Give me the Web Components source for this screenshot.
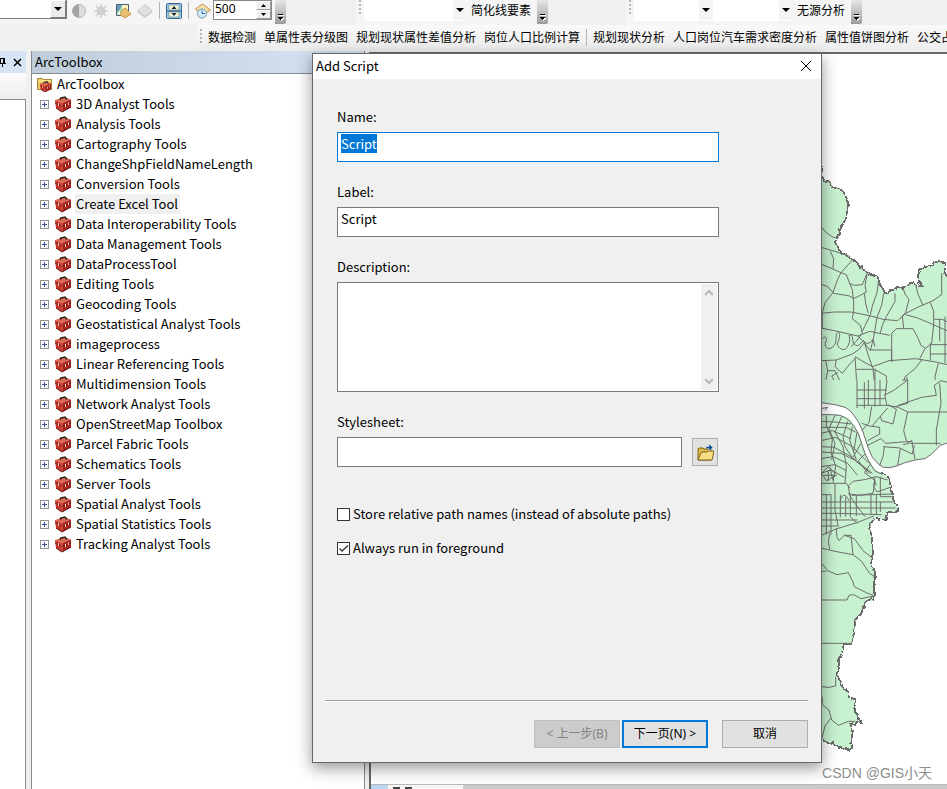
<!DOCTYPE html>
<html lang="zh-CN">
<head>
<meta charset="utf-8">
<title>ArcToolbox - Add Script</title>
<style>
  html, body { height: 100%; margin: 0; overflow: hidden; }
  body {
    --ui: "Noto Sans CJK SC", "Noto Sans", sans-serif;
    --cjk: "Noto Sans CJK SC", sans-serif;
    font: 13px/20px var(--ui);
    color: #000;
    background: #f0f0f0;
  }
</style>
</head>
<body>
<gis-app></gis-app>

<script>
(function () {
  'use strict';

  // Shared base: parses the class's static markup into an open shadow root
  class GisElement extends HTMLElement {
    constructor() {
      super();
      const template = document.createElement('template');
      template.innerHTML = this.constructor.markup;
      this.attachShadow({ mode: 'open' }).appendChild(template.content.cloneNode(true));
    }
    $(sel) { return this.shadowRoot.querySelector(sel); }
  }

  // ── Toolbar pieces ──────────────────────────────────────────

  class GisGrip extends GisElement {
    static markup = `
      <style>
        :host { display: block; flex: none; width: 2px; height: 16px;
          background: repeating-linear-gradient(#b4b4b4 0 2px, transparent 2px 4px); }
      </style>`;
  }

  class GisOverflow extends GisElement {
    static markup = `
      <style>
        :host { display: block; flex: none; width: 11px; height: 24px; }
        button { display: flex; align-items: flex-end; justify-content: center; width: 100%; height: 100%;
          border: 0; padding: 0 0 3px; border-radius: 0 0 2px 0; background: linear-gradient(#e6e6e6, #9c9c9c); }
      </style>
      <button aria-label="Toolbar options">
        <svg width="7" height="7" shape-rendering="crispEdges"><path d="M1 1h6v1H1zM2 4h5L4.500 7z" fill="#fff"/><path d="M1 0h5v1H1zM1 3h5L3.500 6z"/></svg>
      </button>`;
  }

  class GisCombo extends GisElement {
    static markup = `
      <style>
        :host { display: grid; flex: none; box-sizing: border-box; height: 21px; background: #fff; }
        select { grid-area: 1 / 1; appearance: none; width: 100%; height: 100%; border: 0; background: none; }
        span { grid-area: 1 / 1; justify-self: end; display: flex; align-items: center; justify-content: center;
          width: 13px; background: #f4f4f4; pointer-events: none; margin-bottom: 1px; }
        :host([boxed]) { height: 19px; border: solid #7a7a7a; border-width: 0 1px 1px 0; }
        :host([boxed]) span { width: 14px; border: 1px solid; border-color: #fff #808080 #808080 #fff; margin: 0; background: #ececec; }
      </style>
      <select aria-label="Layer"></select>
      <span><svg width="8" height="4"><path d="M0 0h8L4 4z"/></svg></span>`;
  }

  class GisSpinner extends GisElement {
    static markup = `
      <style>
        :host { display: flex; flex: none; width: 59px; height: 20px; background: #fff; border: 1px solid #8a8a8a; box-sizing: border-box; }
        input { flex: 1; min-width: 0; border: 0; padding: 0 0 2px 1px; background: none; font: 12px/16px "Noto Sans", sans-serif; outline: 0; }
        div { display: flex; flex-direction: column; width: 15px; }
        button { flex: 1; display: flex; align-items: center; justify-content: center; padding: 0;
          border: 1px solid; border-color: #fff #999 #999 #fff; background: #efefef; }
      </style>
      <input aria-label="Size" value="500">
      <div>
        <button aria-label="Increase"><svg width="5" height="3"><path d="M0 3h5L2.500 0z"/></svg></button>
        <button aria-label="Decrease"><svg width="5" height="3"><path d="M0 0h5L2.500 3z"/></svg></button>
      </div>`;
  }

  class GisToolbars extends GisElement {
    static markup = `
      <style>
        :host { display: block; overflow: hidden; height: 51px; background: #f0f0f0; }
        .row { display: flex; align-items: flex-start; white-space: nowrap; }
        .first { height: 25px; }
        .bar { display: flex; align-items: flex-start; flex: none; background: #f5f5f5; height: 25px; }
        .icons { display: flex; gap: 6px; padding: 2px 2px 0 4px; align-items: center; }
        .sep { width: 1px; height: 17px; background: #b5b5b5; }
        .text { font: 12px/20px var(--cjk); padding: 0 6px 0 5px; color: #000; }
        .b2 { margin-left: 70px; padding-left: 3px; }
        .b3 { margin-left: 78px; padding-left: 3px; }
        .w102 { width: 102px; margin: 0 0 0 3px; }
        .w79 { width: 79px; }
        .w78 { width: 78px; margin: 0 1px 0 3px; }
        .buttons { align-items: center; box-sizing: border-box; height: 26px; margin-left: 197px; padding: 0 0 2px 3px;
          background: linear-gradient(#f9f9f9, #ececec); border-radius: 3px 0 0 3px; }
        .buttons button { flex: none; border: 0; padding: 0; margin-left: 8px; background: none; font: 12px/20px var(--cjk); }
        .buttons gis-grip { margin-right: -2px; }
        .buttons .sep { flex: none; margin: 0 -2px 0 6px; }
      </style>
      <div class="row first">
        <div class="bar">
          <gis-combo boxed style="width: 67px"></gis-combo>
          <div class="icons">
            <svg width="16" height="16"><circle cx="8" cy="8" r="6.500" fill="#ddd" stroke="#b4b4b4"/><path d="M8 1.500a6.500 6.500 0 0 0 0 13z" fill="#a4a4a4"/></svg>
            <svg width="16" height="16"><path d="M8 1v14M1 8h14M3 3l10 10M13 3L3 13" stroke="#d8d8d8" stroke-width="2"/><circle cx="8" cy="8" r="4.500" fill="#d0d0d0"/></svg>
            <svg width="16" height="16"><path d="M1.500 1.500h12v11h-12z" fill="#a9d6a1" stroke="#476474"/><path d="M2 2h5L5 6 2 9z" fill="#6699c6"/><path d="M7 2h6v6l-2-3-4 1z" fill="#fff3c4"/><path d="M10 5l6 6-6 4-6-4z" fill="#e9bd72" stroke="#c79a50"/><path d="M2 11l3-3v4z" fill="#fff"/></svg>
            <svg width="16" height="16"><path d="M8 1.500l7.500 6.500L8 13.500.5 8z" fill="#e0e0e0" stroke="#c8c8c8"/><path d="M1 9l7 5.500L15 9" fill="none" stroke="#c4c4c4"/></svg>
            <i class="sep"></i>
            <svg width="16" height="16"><rect x=".5" y=".5" width="15" height="15" rx="1" fill="#9ccaec" stroke="#39678c"/><path d="M3 2h10v5H3zM3 9h10v5H3z" fill="#f8f5d2" stroke="#4a6c82" stroke-width=".5"/><path d="M8 3l2.500 3h-5zM8 13l2.500-3h-5z" fill="#123"/><path d="M1 8h14" stroke="#264f71"/></svg>
            <i class="sep"></i>
            <svg width="16" height="16"><path d="M7.500 1L15.500 7 8 12 .5 6z" fill="#f7dfaa" stroke="#c18a45"/><circle cx="7" cy="10.500" r="4.500" fill="#d6ebf9" stroke="#6b96b9"/><path d="M7 7.500v3h3" fill="none" stroke="#286aa2"/></svg>
          </div>
          <gis-spinner></gis-spinner>
          <gis-overflow style="margin-left: 3px"></gis-overflow>
        </div>
        <div class="bar b2"><gis-grip></gis-grip><gis-combo class="w102"></gis-combo><span class="text">简化线要素</span><gis-overflow></gis-overflow></div>
        <div class="bar b3"><gis-grip></gis-grip><gis-combo class="w78"></gis-combo><gis-combo class="w79"></gis-combo><span class="text">无源分析</span><gis-overflow></gis-overflow></div>
      </div>
      <div class="row buttons">
        <gis-grip></gis-grip>
        <button>数据检测</button><button>单属性表分级图</button><button>规划现状属性差值分析</button><button>岗位人口比例计算</button>
        <i class="sep"></i>
        <button>规划现状分析</button><button>人口岗位汽车需求密度分析</button><button>属性值饼图分析</button><button>公交占</button>
      </div>`;
  }

  // ── ArcToolbox tree ─────────────────────────────────────────

  const TOOLBOX = `
    <path d="M0 4L9 1l7 2.500L7 7z" fill="#dd6a54"/>
    <path d="M0 4l7 3v9l-6-4z" fill="#c8352a"/>
    <path d="M7 7l9-3.500V11l-9 5z" fill="#a8231d"/>
    <path d="M5 3.500L6 2l4-1 2 2.500" fill="none" stroke="#2c2525" stroke-width="1.500"/>
    <path d="M0 7l7 3.500L16 7" fill="none" stroke="#701310"/>
    <path d="M7 7v9" stroke="#d9604f"/>
    <path d="M3 7h1v3H3zM10 8h1v3h-1zM13 6.500h1v2.500h-1z" fill="#f0d8d0"/>
    <path d="M1 12l6 4 9-5" fill="none" stroke="#5e1411"/>`;

  class GisToolboxItem extends GisElement {
    static markup = `
      <style>
        :host { display: flex; align-items: center; height: 20px; padding-left: 8px; }
        button { display: flex; padding: 0; border: 0; background: none; margin-right: 6px; }
        .name { margin-left: 3px; padding: 0 2px 0 1px; white-space: nowrap; }
        :host([current]) .name { background: #f0f0f0; }
      </style>
      <button aria-label="Expand">
        <svg width="9" height="9" shape-rendering="crispEdges"><path d="M.5.5h8v8h-8z" fill="#fafafa" stroke="#919191"/><path d="M2 4h5v1H2zM4 2h1v5H4z" fill="#3b4f9c"/></svg>
      </button>
      <svg width="17" height="17">${TOOLBOX}</svg>
      <span class="name"><slot></slot></span>`;
  }

  class GisToolboxPanel extends GisElement {
    static markup = `
      <style>
        :host { display: flex; flex-direction: column; border: solid #868a91; border-width: 0 1px; background: #fff; }
        header { height: 22px; line-height: 22px; padding-left: 3px; border-bottom: 1px solid #868a91;
          background: linear-gradient(90deg, #bfcddb, #d5e3f2); }
        .root { display: flex; align-items: center; gap: 4px; height: 20px; padding-left: 5px; }
      </style>
      <header>ArcToolbox</header>
      <div class="tree">
        <div class="root">
          <svg width="16" height="16"><path d="M.5 2.500h5l1 1h8v10H.5z" fill="#e8c95e" stroke="#a48531"/><path d="M1 5h13" stroke="#fff2a8"/><g transform="translate(3 5) scale(.7)">${TOOLBOX}</g></svg>
          <span>ArcToolbox</span>
        </div>
        <slot></slot>
      </div>`;
  }

  class GisDockStub extends GisElement {
    static markup = `
      <style>
        :host { display: flex; flex-direction: column; background: #f5f5f5; }
        header { display: flex; justify-content: flex-end; align-items: center; gap: 6px; height: 22px; padding-right: 4px; background: #d5e3f2; }
        button { display: flex; border: 0; padding: 0; background: none; }
        .strip { height: 26px; background: linear-gradient(#fbfbfb, #eee); }
        .list { flex: 1; border: solid #868a91; border-width: 1px 1px 0 0; background: #fff; }
      </style>
      <header>
        <button aria-label="Pin"><svg width="9" height="10" shape-rendering="crispEdges"><path d="M1 1h6M2 1v5M5 1v5M6 1v5M0 6h8M4 6v4" stroke="#000" fill="none"/></svg></button>
        <button aria-label="Close"><svg width="9" height="9"><path d="M1 1l7 7M8 1L1 8" stroke="#000" stroke-width="1.500"/></svg></button>
      </header>
      <div class="strip"></div>
      <div class="list"></div>`;
  }

  // ── Map view ────────────────────────────────────────────────

  class GisMap extends GisElement {
    static markup = `
      <style>
        :host { display: flex; flex-direction: column; box-sizing: border-box; min-width: 0; border: solid #666; border-width: 2px 0 0 2px; background: #fff; }
        .canvas { flex: 1; display: flex; justify-content: flex-end; min-height: 0; overflow: hidden; }
        svg { display: block; flex: none; }
        footer { display: flex; height: 4px; border-top: 1px solid #b9b9b9; background: #f5f5f5; }
        footer i { width: 17px; background: #b9d7f0; }
        footer b { width: 7px; height: 2px; margin: 2px 0 0 5px; background: #444; }
        footer span { flex: 1; margin-left: 51px; background: #cacaca; }
      </style>
      <div class="canvas">
        <svg width="132" height="731" viewBox="815 54 132 731" shape-rendering="crispEdges" aria-label="Map">
          <defs>
            <!-- roughens district borders into a surveyed coast -->
            <filter id="rough" x="-5%" y="-5%" width="110%" height="110%"><feTurbulence type="fractalNoise" baseFrequency=".08" numOctaves="2" seed="4"/><feDisplacementMap in="SourceGraphic" scale="12" xChannelSelector="R" yChannelSelector="G"/></filter>
          </defs>
          <g fill="#c8f1d0" stroke="#6b6b6b" stroke-width="3" stroke-linejoin="round">
            <g transform="translate(815 150) scale(.33333)">
              <path stroke="none" d="M0 80H18L28 90 40 94 52 112 72 116 84 124 92 136 94 150 99 158 97 185 93 205 84 222 77 230 74 252 66 262 60 275 66 290 72 300 96 318 112 330 122 330 130 345 148 358 156 370 172 375 188 380 194 400 206 422 212 432 222 424 240 418 246 410 262 414 275 408 290 398 314 408 324 408 312 396 309 375 312 360 330 352 350 346 366 334 380 332 392 344 388 370 400 378V752H0z"/>
              <path fill="none" stroke-width="5" filter="url(#rough)" d="M18 50l6 8-4 10M18 80L28 90 40 94 52 112 72 116 84 124 92 136 94 150 99 158 97 185 93 205 84 222 77 230 74 252 66 262 60 275 66 290 72 300 96 318 112 330 122 330 130 345 148 358 156 370 172 375 188 380 194 400 206 422 212 432 222 424 240 418 246 410 262 414 275 408 290 398 314 408 324 408 312 396 309 375 312 360 330 352 350 346 366 334 380 332 392 344 388 370 400 378"/>
              <path fill="none" d="M18 230l16 18 20 14h8M18 292l28 8 20 6 40 14M46 304l10 22-2 30M18 342l24 10 36 16 36-40M78 368l-10 20-14 40-24 30-8 30v48M18 402l20 8 18 20 48 8 12 8 20-10 18-10-4-20 6-32M78 368l16 6 10 26 8 20 4 36v26l-4 24 24 20 6 24-18 24-16 16M104 400l14 6 24-2 14-34M148 430l4 30 8 30M190 396l-4 32-14 40-6 26-24 50M206 430l-6 36-14 36-10 60-10 40M240 430v24l-26 46-12 26-6 22M264 414l6 18 12 16-10 40-10 10 4 36M18 490l40-4h50l60 12 36 10 44 4 24-22 40-20 42-18 26-18V370M302 402l6 28 16 36M346 458l10 26v40l-6 56-20 16-16 30M272 494l36 10 38 16 54 24M18 534l40 8 70 16 36-14 60 12M128 558l20 20-16 20-20 14-48 18-46 2M148 578l16 22h66M148 578l14 44 12 34 4 40M230 636v-86l14-14h50l14 26 10 24 12 8M230 600v34M120 620l20 12 32 18 50-18 80-6 60 10 34 8M120 622l4 60-2 68M124 658h54l36 20v72M122 696h90M128 720h86M148 696v54M180 656v94M195 696v54M346 580v52M358 508h24l18 10M374 508v66M346 584h54M348 612h52M390 500v140M320 630l-20 26-30 24-10 40-30 20-40 10M370 640l-10 40 8 70M276 680v70M18 570c14-18 20-4 14 6s6 30 22 14 4-36 14-42 6 20 0 30 20 36 32 8-6-30 6-30 2 24 16 30 20-20 26-12 14 10 26-6l6 22M32 632l6 30-8 40-12 20M64 630l-4 20 22 20 24-30 14-14M38 662h22l16 34-8 40 10 14M62 700l-12-22 18-10M18 712l34 6 14 32M76 700l30 6v44M380 700h-20l-8 20 10 30"/>
            </g>
            <g transform="translate(815 380) scale(.33333)">
              <path stroke="none" d="M0 0H400V188L376 196 350 222 330 236 300 240 270 248 245 258 225 263 205 262H0z"/>
              <path stroke="none" d="M0 104H92L180 265 200 278 215 285 222 296 225 310 232 340 235 360 245 372 250 390 240 398 215 398 213 420 195 418 180 412 168 430 164 440 170 470 172 500 174 520 166 556 180 574 176 662H0z"/>
              <path fill="#fff" d="M18 68L60 74 90 82 105 92 118 108 130 125 142 150 152 180 160 205 172 232 190 252 205 262 240 268 215 285 200 278 180 268 165 245 150 215 140 185 130 155 118 135 105 118 92 110 75 104 50 102 18 104z" stroke="none"/>
              <path fill="none" d="M18 68L60 74 90 82 105 92 118 108 130 125 142 150 152 180 160 205 172 232 190 252 205 262 225 263 245 258 270 248 300 240 330 236 350 222 376 196 400 188M18 104h32l25 2 17 8 13 10 13 17 12 20 10 30 10 30 15 30 15 22 22 10M18 86l20-4-8 8"/>
              <path fill="none" stroke-width="5" filter="url(#rough)" d="M198 278L215 285 222 296 225 310 232 340 235 360 245 372 250 390 240 398 215 398 213 420 195 418 180 412 168 430 164 440 170 470 172 500 174 520 166 556 180 574 176 662"/>
              <path fill="none" d="M126 0v84M148 6v80M160 0v78M180 0v80M195 0v78M126 30h90M126 56h84M126 76h90l34 6 28 14h122M216 0l-6 50 6 26M208 46l30-16 40-30M262 0h16v70l-38 10M250 76l70-24 44-6-6-30 20-14 22 6M374 10l4 60-14 80v46M278 96l-12 56 8 30 12 8h90M220 74l24 14-10 44-34-10-4-14M170 80l-8 48-22 24M218 84l-30 34-16 20M140 130l24 8 30 4v20l-36 20M158 196l40-20 14 14 50-4 28-2M208 200l-4 30-10 26M204 200l50 4 38 18 6-26M256 206l-8 50M290 180l10 58M282 190l-18 4"/>
              <!-- riverside blocks -->
              <path fill="none" d="M18 124l40 2 50 6M18 142h74l30 14M18 160l34-8 56 24M18 182l44-10 50 28 48 48M18 200l40 2 50 28 64 50M18 216l60 4 40 20 50 40M18 236l36-6 44 20 30 36M18 260l42-6 34 18M18 280l30-10 40 22M18 310h76l10 14M34 108v30l18 40-4 40 14 40-8 50M60 106l-18 40 18 44-10 50M80 110l-20 46 24 44 10 60-4 50M98 124l-14 46 6 30 24 36M112 140l-8 40 20 60M126 156l-10 60M138 190l-24 42M150 222l-20 20 30 40M168 250l-20 28 30 22 6 16M60 280l-20-20-20 20 14 22 26-14M40 274v30M26 286h40M44 260l10 40M100 318l14-14 40-6 30-8 34 10M100 318l4 24 30 4 40-6 6-40M180 290l-4 30 10 16 40-14M196 290v60h34"/>
              <path fill="none" d="M18 344h30v120M34 344v120M18 366h216M18 384h224M18 400h52l130 4M18 420h110M18 438h50M60 310v80l10 50M76 344v68M92 350v60M106 344v66l20 20M124 348v60M168 344v60M184 344v60M196 366v30M76 364c4-24 16-24 26-2M100 340l20 30 30 40M110 346l126-4M18 466l48-20 60-18 50-20M44 460l-4 24 4 24M64 446l2 26 6 10 16-16h20l6 58M88 466l30 10 26 36 28 22M18 504l42 10 54 10 26 20 24 36 16 10M18 548l20 24 28 12 34-6 10 20 8 26 20 10 36 16M18 574h16M96 660l10-14 20-2 12 12 36-8"/>
            </g>
            <g transform="translate(815 580) scale(.33333)">
              <path stroke="none" d="M0 0H178V20L176 50 150 68 144 95 120 120 118 160 108 192 86 192 82 215 72 240 72 265 64 285 74 300 85 325 100 335 102 355 118 358 120 390 130 415 144 430 125 425 120 435 106 430 112 460 108 490 112 500 100 512 85 505 70 500 55 488 40 490 22 480 0 475z"/>
              <path fill="none" stroke-width="5" filter="url(#rough)" d="M178 0V20L176 50 150 68 144 95 120 120 118 160 108 192 86 192 82 215 72 240 72 265 64 285 74 300 85 325 100 335 102 355 118 358 120 390 130 415 144 430 125 425 120 435 106 430 112 460 108 490 112 500 100 512 85 505 70 500 55 488 40 490 22 480"/>
              <path fill="none" d="M18 60h78l6-14 14-2 22 12 38-8M18 190h90M18 320l24 2 20-4v-28M22 350v24l20 16 8 30 20 16 30-12h20M48 414l-18 24-10 40M112 0l6 20 36 18 20 8"/>
            </g>
          </g>
        </svg>
      </div>
      <footer><i></i><b></b><b></b><span></span></footer>`;
  }

  // ── Add Script wizard ───────────────────────────────────────

  class GisField extends GisElement {
    static markup = `
      <style>
        :host { display: block; margin-bottom: 22px; }
        label { display: block; height: 18px; line-height: 16px; margin-bottom: 5px; }
        .row { display: flex; align-items: center; gap: 10px; }
        input, textarea { display: block; box-sizing: border-box; flex: 1; min-width: 0; margin: 0; border: 1px solid #7a7a7a; border-radius: 0;
          background: #fff; color: #000; font: 13px/18px var(--ui); outline: 0; resize: none; }
        input { height: 30px; padding: 0 3px 7px; }
        input:focus { border-color: #0078d7; }
        input::selection { background: #0078d7; color: #fff; }
        .area { flex: 1; display: flex; box-sizing: border-box; height: 110px; border: 1px solid #7a7a7a; background: #fff; }
        .area textarea { border: 0; height: 100%; overflow: hidden; }
        .scroll { display: flex; flex-direction: column; justify-content: space-between; align-items: center; width: 16px; margin: 1px; padding: 6px 0; box-sizing: border-box; background: #f0f0f0; }
      </style>
      <label for="field"></label>
      <div class="row"><slot></slot></div>`;

    connectedCallback() {
      const row = this.$('.row');
      this.$('label').textContent = this.getAttribute('label');
      if (this.hasAttribute('multiline')) {
        row.insertAdjacentHTML('afterbegin', `
          <div class="area"><textarea id="field"></textarea><div class="scroll">
            <svg width="8" height="6"><path d="M0 5l4-4 4 4" fill="none" stroke="#b8b8b8" stroke-width="2"/></svg>
            <svg width="8" height="6"><path d="M0 1l4 4 4-4" fill="none" stroke="#b8b8b8" stroke-width="2"/></svg>
          </div></div>`);
        return;
      }
      row.insertAdjacentHTML('afterbegin', '<input id="field" type="text" spellcheck="false">');
      const input = this.$('input');
      input.value = this.getAttribute('value') || '';
      if (this.hasAttribute('current')) {
        input.focus();
        input.select();
      }
    }
  }

  class GisCheck extends GisElement {
    static markup = `
      <style>
        :host { display: block; margin-bottom: 14px; }
        label { display: flex; align-items: center; gap: 3px; height: 20px; white-space: nowrap; }
        span { display: grid; }
        input { grid-area: 1 / 1; appearance: none; box-sizing: border-box; width: 13px; height: 13px; margin: 0; border: 1px solid #333; background: #fff; }
        svg { grid-area: 1 / 1; visibility: hidden; pointer-events: none; }
        input:checked + svg { visibility: visible; }
      </style>
      <label>
        <span><input type="checkbox"><svg width="13" height="13"><path d="M2.500 6.500L5 9 11 3.500" fill="none" stroke="#333" stroke-width="1.300"/></svg></span>
        <slot></slot>
      </label>`;

    connectedCallback() {
      this.$('input').checked = this.hasAttribute('checked');
    }
  }

  class GisButton extends GisElement {
    static markup = `
      <style>
        :host { display: block; width: 86px; height: 28px; }
        button { display: flex; align-items: center; justify-content: center; width: 100%; height: 100%; padding: 0; border: 1px solid #adadad; background: #e1e1e1;
          color: #000; font: 12px/18px "Noto Sans", var(--ui); white-space: pre; }
        :host([primary]) button { border: 2px solid #0078d7; }
        button:disabled { border-color: #bfbfbf; background: #ccc; color: #838383; }
      </style>
      <button><slot></slot></button>`;

    connectedCallback() {
      this.$('button').disabled = this.hasAttribute('disabled');
      if (this.hasAttribute('label')) this.$('button').setAttribute('aria-label', this.getAttribute('label'));
    }
  }

  class GisScriptDialog extends GisElement {
    static markup = `
      <style>
        :host { display: flex; flex-direction: column; border: 1px solid #686868; background: #f0f0f0; box-shadow: 0 5px 15px rgba(0, 0, 0, .42); }
        header { display: flex; align-items: center; justify-content: space-between; box-sizing: border-box; height: 25px; padding: 0 9px 2px 3px; background: #fff; }
        header button { display: flex; border: 0; padding: 0; background: none; }
        .form { flex: 1; padding: 30px 102px 0 24px; }
        .checks { padding-top: 15px; }
        .browse { width: 26px; margin-right: 1px; }
        .actions { display: flex; justify-content: flex-end; gap: 2px; margin: 0 13px 14px 12px; padding-top: 19px; border-top: 1px solid #a0a0a0; box-shadow: inset 0 1px #fff; }
        .cancel { margin-left: 12px; }
      </style>
      <header><span>Add Script</span><button aria-label="Close"><svg width="12" height="12"><path d="M1 1l10 10M11 1L1 11" stroke="#000"/></svg></button></header>
      <div class="form">
        <gis-field label="Name:" value="Script" current></gis-field>
        <gis-field label="Label:" value="Script"></gis-field>
        <gis-field label="Description:" multiline></gis-field>
        <gis-field label="Stylesheet:">
          <gis-button class="browse" label="Browse"><svg width="17" height="17"><path d="M1 5l1-1h4l1 1h7v11H1z" fill="#dcb84c" stroke="#7c6318"/><path d="M4 9l1-1h5l1-1h6l-2 9H1z" fill="#f8df87" stroke="#7c6318"/><path d="M9 4V2.500h3V0l4 3.500L12 7V4.500h-1" fill="#0b4c8f" stroke="#dcecff" stroke-width=".5"/></svg></gis-button>
        </gis-field>
        <div class="checks">
          <gis-check>Store relative path names (instead of absolute paths)</gis-check>
          <gis-check checked>Always run in foreground</gis-check>
        </div>
      </div>
      <div class="actions">
        <gis-button disabled>&lt; 上一步(B)</gis-button>
        <gis-button primary>下一页(N) &gt;</gis-button>
        <gis-button class="cancel">取消</gis-button>
      </div>`;
  }

  // ── Shell ───────────────────────────────────────────────────

  const TOOLBOXES = [
    '3D Analyst Tools', 'Analysis Tools', 'Cartography Tools', 'ChangeShpFieldNameLength',
    'Conversion Tools', 'Create Excel Tool', 'Data Interoperability Tools', 'Data Management Tools',
    'DataProcessTool', 'Editing Tools', 'Geocoding Tools', 'Geostatistical Analyst Tools',
    'imageprocess', 'Linear Referencing Tools', 'Multidimension Tools', 'Network Analyst Tools',
    'OpenStreetMap Toolbox', 'Parcel Fabric Tools', 'Schematics Tools', 'Server Tools',
    'Spatial Analyst Tools', 'Spatial Statistics Tools', 'Tracking Analyst Tools'
  ];

  class GisApp extends GisElement {
    static markup = `
      <style>
        :host { display: flex; flex-direction: column; height: 100vh; position: relative; }
        main { flex: 1; display: flex; min-height: 0; }
        gis-dock-stub { width: 26px; margin-right: 5px; }
        gis-toolbox-panel { width: 332px; }
        gis-map { flex: 1; margin: 1px 0 0 4px; }
        gis-script-dialog { position: absolute; inset: 53px 125px 26px 312px; }
        .credit { position: absolute; right: 15px; bottom: 6px; font: 14px/20px "Liberation Sans", var(--cjk); color: #8c8c8c; }
      </style>
      <gis-toolbars></gis-toolbars>
      <main>
        <gis-dock-stub></gis-dock-stub>
        <gis-toolbox-panel></gis-toolbox-panel>
        <gis-map></gis-map>
      </main>
      <gis-script-dialog></gis-script-dialog>
      <span class="credit">CSDN @GIS小天</span>`;

    connectedCallback() {
      const panel = this.$('gis-toolbox-panel');
      TOOLBOXES.forEach((name) => {
        const item = document.createElement('gis-toolbox-item');
        item.textContent = name;
        item.toggleAttribute('current', name === 'Create Excel Tool');
        panel.appendChild(item);
      });
    }
  }

  customElements.define('gis-grip', GisGrip);
  customElements.define('gis-overflow', GisOverflow);
  customElements.define('gis-combo', GisCombo);
  customElements.define('gis-spinner', GisSpinner);
  customElements.define('gis-toolbars', GisToolbars);
  customElements.define('gis-toolbox-item', GisToolboxItem);
  customElements.define('gis-toolbox-panel', GisToolboxPanel);
  customElements.define('gis-dock-stub', GisDockStub);
  customElements.define('gis-map', GisMap);
  customElements.define('gis-field', GisField);
  customElements.define('gis-check', GisCheck);
  customElements.define('gis-button', GisButton);
  customElements.define('gis-script-dialog', GisScriptDialog);
  customElements.define('gis-app', GisApp);
})();
</script>
</body>
</html>
